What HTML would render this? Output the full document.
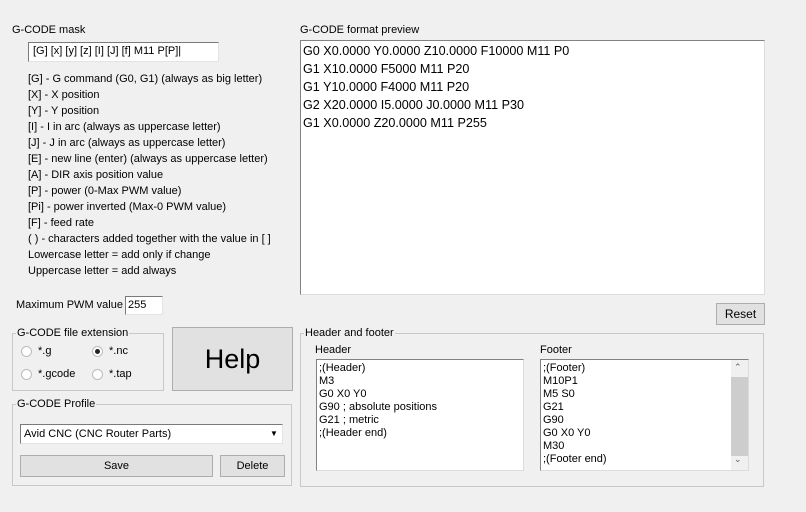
<!DOCTYPE html>
<html><head><meta charset="utf-8"><style>
*{box-sizing:border-box;margin:0;padding:0}
body{width:806px;height:512px;background:#f0f0f0;font-family:"Liberation Sans",sans-serif;font-size:11px;color:#000;position:relative;overflow:hidden}
.a{position:absolute;white-space:nowrap}
.inp{position:absolute;background:#fff;border:1px solid #7a7a7a;border-right-color:#e3e3e3;border-bottom-color:#e3e3e3}
.ta{position:absolute;background:#fff;border:1px solid #828282;border-right-color:#dcdcdc;border-bottom-color:#dcdcdc;line-height:13px;padding:2px 2px}
.grp{position:absolute;border:1px solid #c8c8c8}
.lg{position:absolute;background:#f0f0f0;padding:0 1px;top:-7px;left:3px}
.btn{position:absolute;background:#e1e1e1;border:1px solid #adadad;display:flex;align-items:center;justify-content:center}
.rad{position:absolute;width:11px;height:11px;border:1px solid #bbb;border-radius:50%;background:#fff}
.rad.on::after{content:"";position:absolute;left:2px;top:2px;width:5px;height:5px;border-radius:50%;background:#222}
</style></head><body>
<div class="a" style="left:12px;top:24px">G-CODE mask</div>
<div class="inp" style="left:28px;top:42px;width:191px;height:20px;padding:2px 4px;font-size:11px">[G] [x] [y] [z] [I] [J] [f] M11 P[P]|</div>
<div class="a" style="left:28px;top:71px;line-height:16px">[G] - G command (G0, G1) (always as big letter)<br>[X] - X position<br>[Y] - Y position<br>[I] - I in arc (always as uppercase letter)<br>[J] - J in arc (always as uppercase letter)<br>[E] - new line (enter) (always as uppercase letter)<br>[A] - DIR axis position value<br>[P] - power (0-Max PWM value)<br>[Pi] - power inverted (Max-0 PWM value)<br>[F] - feed rate<br>( ) - characters added together with the value in [ ]<br>Lowercase letter = add only if change<br>Uppercase letter = add always</div>
<div class="a" style="left:16px;top:299px">Maximum PWM value</div>
<div class="inp" style="left:125px;top:296px;width:38px;height:19px;padding:2px 2px">255</div>
<div class="grp" style="left:12px;top:333px;width:152px;height:58px"><span class="lg">G-CODE file extension</span></div>
<div class="rad" style="left:21px;top:346px"></div><div class="a" style="left:38px;top:345px">*.g</div>
<div class="rad on" style="left:92px;top:346px"></div><div class="a" style="left:109px;top:345px">*.nc</div>
<div class="rad" style="left:21px;top:369px"></div><div class="a" style="left:38px;top:368px">*.gcode</div>
<div class="rad" style="left:92px;top:369px"></div><div class="a" style="left:109px;top:368px">*.tap</div>
<div class="btn" style="left:172px;top:327px;width:121px;height:64px;font-size:27px">Help</div>
<div class="grp" style="left:12px;top:404px;width:280px;height:82px"><span class="lg">G-CODE Profile</span></div>
<div class="inp" style="left:20px;top:424px;width:263px;height:20px;padding:3px 3px">Avid CNC (CNC Router Parts)</div>
<div class="a" style="left:266px;top:426px;width:16px;height:16px;background:#fff;font-size:8px;text-align:center;line-height:16px">&#9660;</div>
<div class="btn" style="left:20px;top:455px;width:193px;height:22px">Save</div>
<div class="btn" style="left:220px;top:455px;width:65px;height:22px">Delete</div>
<div class="a" style="left:300px;top:24px">G-CODE format preview</div>
<div class="ta" style="left:300px;top:40px;width:465px;height:255px;font-size:12.6px;line-height:18px;padding:1px 2px">G0 X0.0000 Y0.0000 Z10.0000 F10000 M11 P0<br>G1 X10.0000 F5000 M11 P20<br>G1 Y10.0000 F4000 M11 P20<br>G2 X20.0000 I5.0000 J0.0000 M11 P30<br>G1 X0.0000 Z20.0000 M11 P255</div>
<div class="btn" style="left:716px;top:303px;width:49px;height:22px;font-size:12px">Reset</div>
<div class="grp" style="left:300px;top:333px;width:464px;height:154px"><span class="lg">Header and footer</span></div>
<div class="a" style="left:315px;top:344px">Header</div>
<div class="ta" style="left:316px;top:359px;width:208px;height:112px">;(Header)<br>M3<br>G0 X0 Y0<br>G90 ; absolute positions<br>G21 ; metric<br>;(Header end)</div>
<div class="a" style="left:540px;top:344px">Footer</div>
<div class="ta" style="left:540px;top:359px;width:209px;height:112px">;(Footer)<br>M10P1<br>M5 S0<br>G21<br>G90<br>G0 X0 Y0<br>M30<br>;(Footer end)</div>
<div class="a" style="left:731px;top:360px;width:17px;height:110px;background:#f0f0f0"></div>
<div class="a" style="left:731px;top:377px;width:17px;height:79px;background:#cdcdcd"></div>
<div class="a" style="left:734px;top:362px;font-size:9px;color:#606060">&#8963;</div>
<div class="a" style="left:734px;top:454px;font-size:9px;color:#606060">&#8964;</div>
</body></html>
